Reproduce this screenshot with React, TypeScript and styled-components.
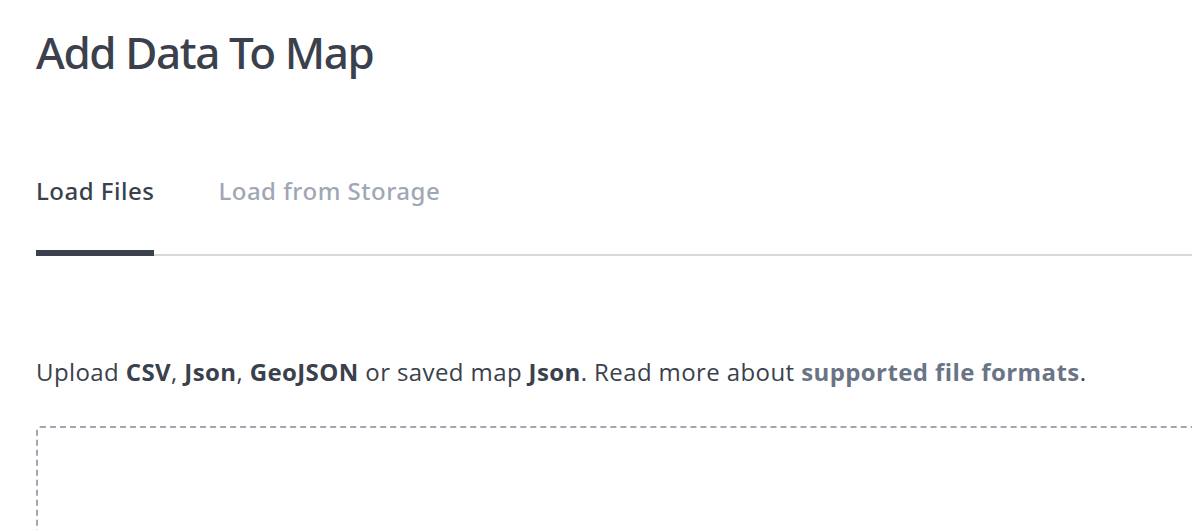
import React, { useState } from 'react';
import styled, { createGlobalStyle } from 'styled-components';

const GlobalStyle = createGlobalStyle`
    html, body {
        margin: 0;
        padding: 0;
        background: #ffffff;
        overflow: hidden;
    }
    body {
        font-family: 'Open Sans', 'Noto Sans', sans-serif;
        -webkit-font-smoothing: antialiased;
    }
`;

const Modal = styled.div`
    width: 1260px;
    padding: 22px 0 0 36px;
    box-sizing: border-box;
`;

const Title = styled.h1`
    margin: 0;
    font-family: 'Noto Sans', 'Open Sans', sans-serif;
    font-size: 44px;
    font-weight: 500;
    line-height: 60px;
    color: #3a414c;
    letter-spacing: -1.4px;
`;

const TabBar = styled.div`
    display: flex;
    gap: 64px;
    margin-top: 92px;
    border-bottom: 2px solid #d8d8d8;
`;

const Tab = styled.button<{ active?: boolean }>`
    background: none;
    border: none;
    padding: 2px 0 44px;
    margin: 0 0 -2px;
    font-family: 'Noto Sans', 'Open Sans', sans-serif;
    font-size: 24px;
    font-weight: 500;
    line-height: 30px;
    letter-spacing: 0.5px;
    cursor: pointer;
    color: ${({ active }) => (active ? '#3a414c' : '#a0a7b4')};
    border-bottom: 6px solid ${({ active }) => (active ? '#3a414c' : 'transparent')};
`;

const Intro = styled.p`
    margin: 100px 0 0;
    font-size: 24px;
    line-height: 32px;
    color: #3a414c;
    letter-spacing: 0.4px;

    b {
        font-weight: 700;
    }
`;

const Link = styled.a`
    color: #6a7485;
    font-weight: 700;
    text-decoration: none;
`;

const DropZone = styled.div`
    margin-top: 38px;
    height: 300px;
    border: 2px dashed #a0a7b4;
    border-radius: 4px;
`;

const TABS = ['Load Files', 'Load from Storage'];

export default function App() {
    const [current, setCurrent] = useState(0);
    return (
        <>
            <GlobalStyle />
            <Modal>
                <Title>Add Data To Map</Title>
                <TabBar>
                    {TABS.map((label, i) => (
                        <Tab key={label} active={i === current} onClick={() => setCurrent(i)}>
                            {label}
                        </Tab>
                    ))}
                </TabBar>
                <Intro>
                    Upload <b>CSV</b>, <b>Json</b>, <b>GeoJSON</b> or saved map <b>Json</b>. Read more about{' '}
                    <Link href="#">supported file formats</Link>.
                </Intro>
                <DropZone />
            </Modal>
        </>
    );
}
